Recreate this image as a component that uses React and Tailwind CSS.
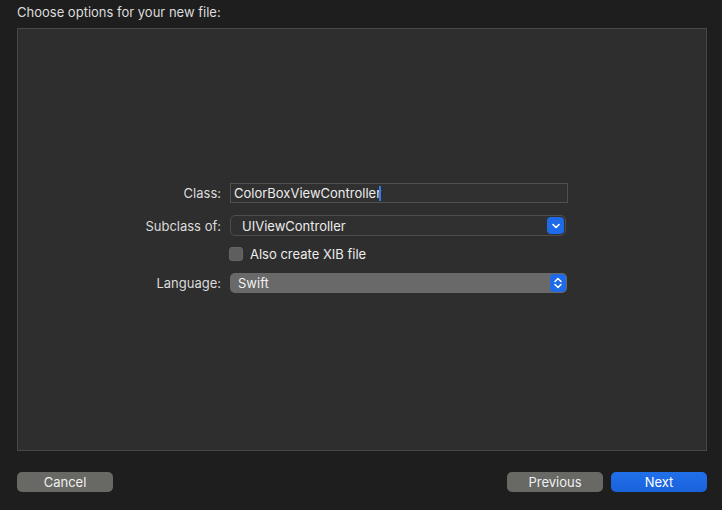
const font = { fontFamily: '"Inter", "Liberation Sans", sans-serif' };

const Chevron = () => (
  <svg width="8" height="6" viewBox="0 0 8 6" fill="none">
    <path d="M1 1.5 L4 4.5 L7 1.5" stroke="white" strokeWidth="1.6" strokeLinecap="round" strokeLinejoin="round" />
  </svg>
);

const Stepper = () => (
  <svg width="8" height="12" viewBox="0 0 8 12" fill="none">
    <path d="M1 4.5 L4 1.5 L7 4.5" stroke="white" strokeWidth="1.5" strokeLinecap="round" strokeLinejoin="round" />
    <path d="M1 7.5 L4 10.5 L7 7.5" stroke="white" strokeWidth="1.5" strokeLinecap="round" strokeLinejoin="round" />
  </svg>
);

const Label = ({ children }) => (
  <div className="w-[203px] text-right text-[#dcdcdc] leading-[16px]">{children}</div>
);

export default function App() {
  return (
    <div className="w-[722px] h-[510px] bg-[#1e1e1e] flex flex-col text-[13px] text-[#e6e6e6]" style={font}>
      {/* title */}
      <div className="h-[28px] px-[17px] pt-[3px] leading-[18px] text-[#dcdcdc]">Choose options for your new file:</div>

      {/* options panel */}
      <div className="ml-[17px] mr-[15px] h-[423px] bg-[#2e2e2e] border border-[#484848] flex items-center">
        <div className="flex flex-col leading-[16px] -mt-[3px]">
          <div className="flex items-center gap-[9px] h-[20px]">
            <Label>Class:</Label>
            <div className="w-[338px] h-[20px] bg-[#303030] border border-[#505050] flex items-center pl-[3px] text-[#ececec]">
              <span>ColorBoxViewControlle</span>
              <span>r</span>
              <span className="w-[2px] h-[15px] bg-[#2a7bf5] -ml-[2px]"></span>
            </div>
          </div>

          <div className="flex items-center gap-[9px] h-[21px] mt-[12px]">
            <Label>Subclass of:</Label>
            <div className="h-[21px] w-[336px] bg-[#303030] border border-[#4c4c4c] rounded-[5px] flex items-center justify-between pl-[11px] pr-[1px] text-[#ececec]">
              <span>UIViewController</span>
              <span className="w-[17px] h-[17px] rounded-[4px] bg-[#1f6ae6] flex items-center justify-center">
                <Chevron />
              </span>
            </div>
          </div>

          <div className="flex items-center h-[14px] mt-[11px] pl-[211px] gap-[7px] text-[#ececec]">
            <span className="w-[14px] h-[14px] rounded-[3px] bg-[#5e5e5e] border border-[#666]"></span>
            <span>Also create XIB file</span>
          </div>

          <div className="flex items-center gap-[9px] h-[20px] mt-[12px]">
            <Label>Language:</Label>
            <div className="h-[20px] w-[337px] bg-[#696969] rounded-[5px] flex items-center justify-between pl-[8px] pr-[1px] text-[#f0f0f0]">
              <span>Swift</span>
              <span className="w-[16px] h-[18px] rounded-[4px] bg-[#1f6ae6] flex items-center justify-center">
                <Stepper />
              </span>
            </div>
          </div>
        </div>
      </div>

      {/* buttons */}
      <div className="pl-[17px] pr-[15px] pt-[21px] flex items-center">
        <button className="w-[96px] h-[20px] rounded-[5px] bg-[#686864] text-[#f0f0f0] leading-[20px]">Cancel</button>
        <div className="flex-1"></div>
        <button className="w-[96px] h-[20px] rounded-[5px] bg-[#686864] text-[#f0f0f0] leading-[20px]">Previous</button>
        <button className="ml-[8px] w-[96px] h-[20px] rounded-[5px] bg-gradient-to-b from-[#2070ea] to-[#1a62dc] text-white leading-[20px]">Next</button>
      </div>
    </div>
  );
}
